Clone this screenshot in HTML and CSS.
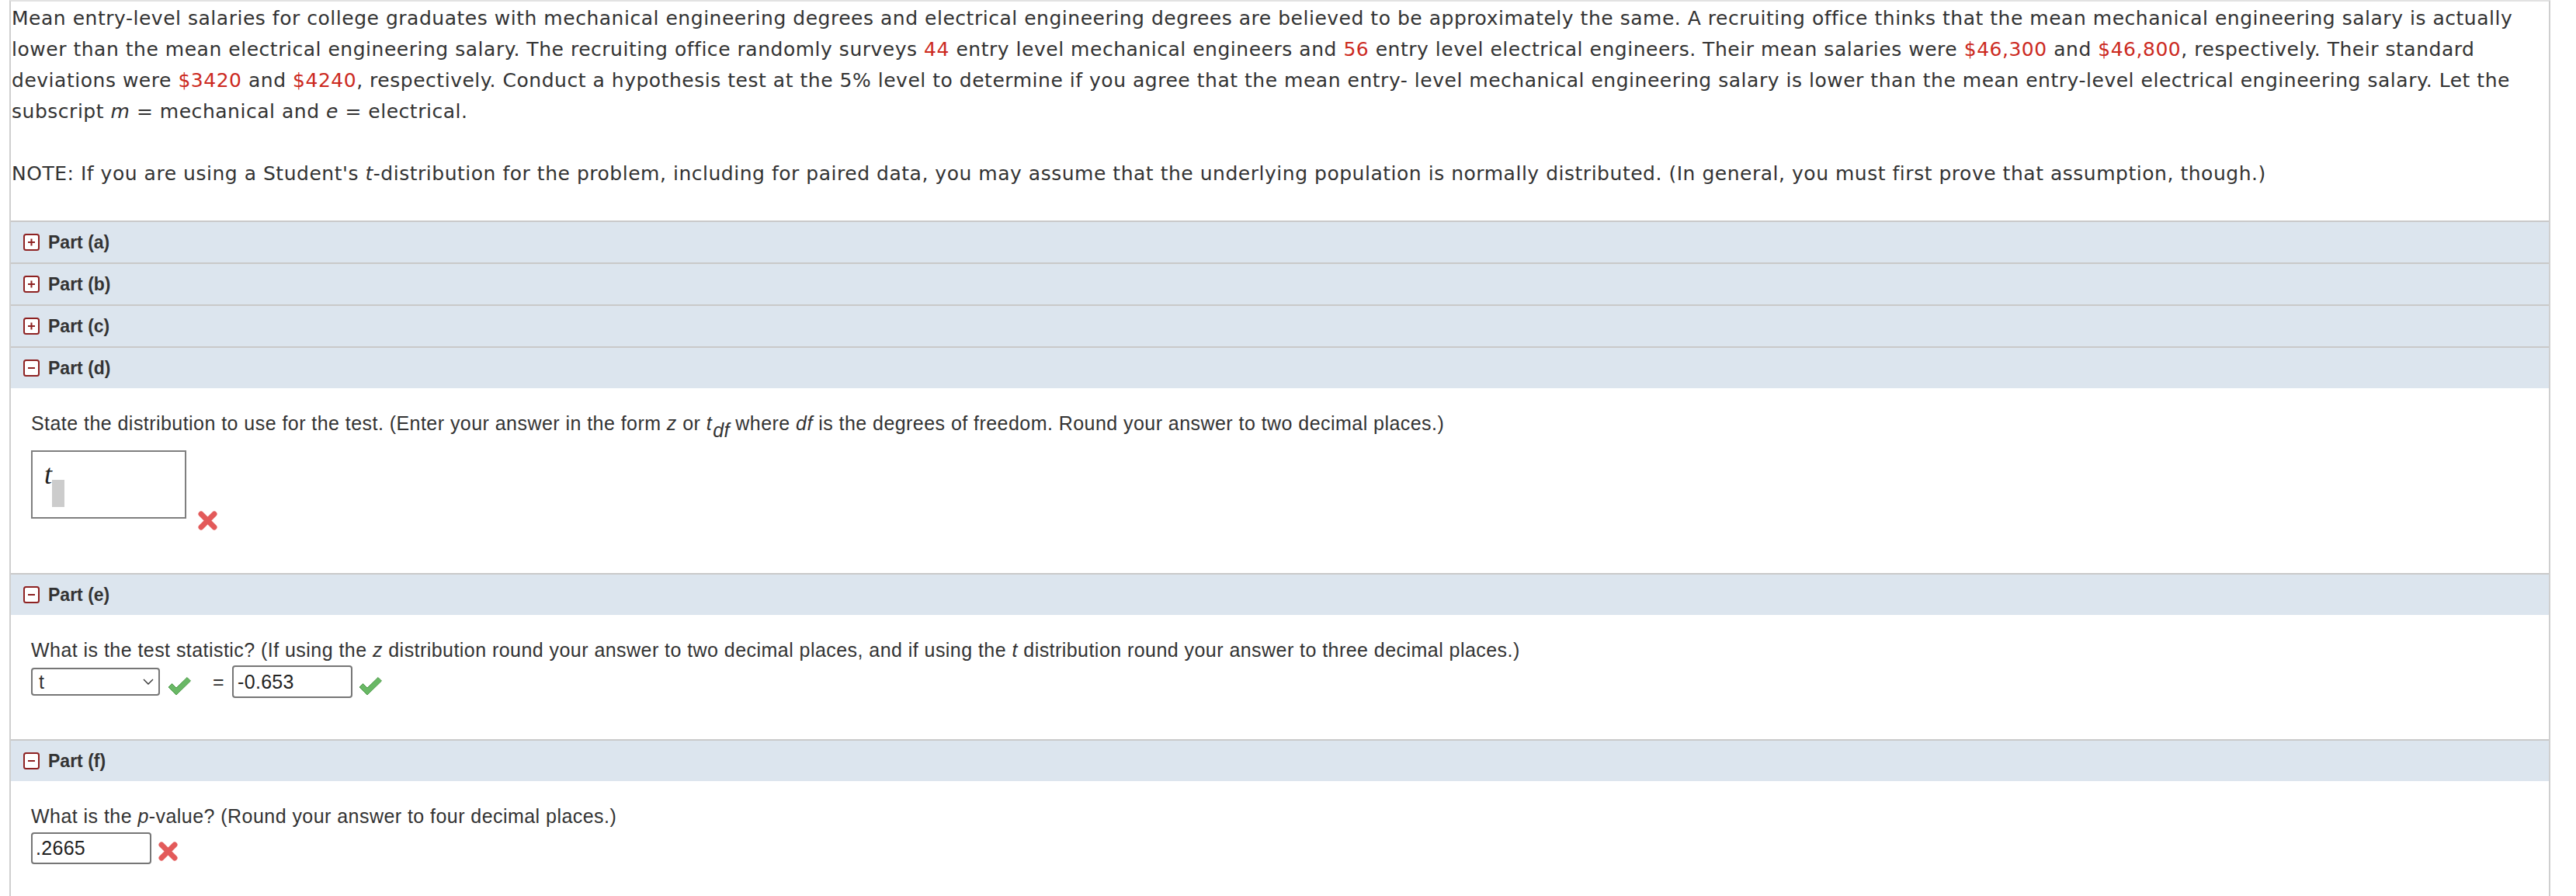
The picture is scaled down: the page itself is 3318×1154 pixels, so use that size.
FILE: index.html
```html
<!DOCTYPE html>
<html lang="en">
<head>
  <meta charset="UTF-8" />
  <title>Hypothesis Test - Salaries</title>
  <link rel="stylesheet" href="styles.css">
</head>
<body>
  <div class="question">
    <!-- problem statement -->
    <div class="intro">
      <span class="line">Mean entry-level salaries for college graduates with mechanical engineering degrees and electrical engineering degrees are believed to be approximately the same. A recruiting office thinks that the mean mechanical engineering salary is actually</span>
      <span class="line">lower than the mean electrical engineering salary. The recruiting office randomly surveys <span class="num">44</span> entry level mechanical engineers and <span class="num">56</span> entry level electrical engineers. Their mean salaries were <span class="num">$46,300</span> and <span class="num">$46,800</span>, respectively. Their standard</span>
      <span class="line">deviations were <span class="num">$3420</span> and <span class="num">$4240</span>, respectively. Conduct a hypothesis test at the 5% level to determine if you agree that the mean entry- level mechanical engineering salary is lower than the mean entry-level electrical engineering salary. Let the</span>
      <span class="line">subscript <i>m</i> = mechanical and <i>e</i> = electrical.</span>
      <span class="line">&nbsp;</span>
      <span class="line">NOTE: If you are using a Student's <i>t</i>-distribution for the problem, including for paired data, you may assume that the underlying population is normally distributed. (In general, you must first prove that assumption, though.)</span>
    </div>

    <!-- collapsed parts -->
    <div class="part-head">
      <svg class="toggle" viewBox="0 0 21 22"><rect x="1" y="1" width="19" height="20" rx="2.5" fill="#fff" stroke="#8e2222" stroke-width="2"/><path d="M6 11h9M10.5 6.5v9" stroke="#8e2222" stroke-width="2"/></svg>
      <span>Part (a)</span>
    </div>
    <div class="part-head">
      <svg class="toggle" viewBox="0 0 21 22"><rect x="1" y="1" width="19" height="20" rx="2.5" fill="#fff" stroke="#8e2222" stroke-width="2"/><path d="M6 11h9M10.5 6.5v9" stroke="#8e2222" stroke-width="2"/></svg>
      <span>Part (b)</span>
    </div>
    <div class="part-head">
      <svg class="toggle" viewBox="0 0 21 22"><rect x="1" y="1" width="19" height="20" rx="2.5" fill="#fff" stroke="#8e2222" stroke-width="2"/><path d="M6 11h9M10.5 6.5v9" stroke="#8e2222" stroke-width="2"/></svg>
      <span>Part (c)</span>
    </div>

    <!-- part d -->
    <div class="part-head">
      <svg class="toggle" viewBox="0 0 21 22"><rect x="1" y="1" width="19" height="20" rx="2.5" fill="#fff" stroke="#8e2222" stroke-width="2"/><path d="M6 11h9" stroke="#8e2222" stroke-width="2"/></svg>
      <span>Part (d)</span>
    </div>
    <div class="part-body part-d">
      <p>State the distribution to use for the test. (Enter your answer in the form <i>z</i> or <i>t</i><i class="sub">df</i> where <i>df</i> is the degrees of freedom. Round your answer to two decimal places.)</p>
      <div class="answer answer-d">
        <div class="math-box">
          <span class="math-t">t</span><span class="math-slot"></span>
        </div>
        <svg class="mark-x drop" viewBox="0 0 27 27"><path d="M5 5L22 22M22 5L5 22" stroke="#e35a5a" stroke-width="7" stroke-linecap="round"/></svg>
      </div>
    </div>

    <!-- part e -->
    <div class="part-head">
      <svg class="toggle" viewBox="0 0 21 22"><rect x="1" y="1" width="19" height="20" rx="2.5" fill="#fff" stroke="#8e2222" stroke-width="2"/><path d="M6 11h9" stroke="#8e2222" stroke-width="2"/></svg>
      <span>Part (e)</span>
    </div>
    <div class="part-body part-e">
      <p>What is the test statistic? (If using the <i>z</i> distribution round your answer to two decimal places, and if using the <i>t</i> distribution round your answer to three decimal places.)</p>
      <div class="answer">
        <div class="fake-select">
          <span>t</span>
          <svg class="chev" viewBox="0 0 14 8"><path d="M1 1l6 6 6-6" fill="none" stroke="#333" stroke-width="1.4"/></svg>
        </div>
        <svg class="mark-check" viewBox="0 0 30 24"><path d="M1 13L5.5 8.5L11 14L25 0.5L29.5 5L11 23Z" fill="#69b865" stroke="#4f9a4b" stroke-width="1"/></svg>
        <span class="eq">=</span>
        <input class="box stat" type="text" value="-0.653">
        <svg class="mark-check" viewBox="0 0 30 24"><path d="M1 13L5.5 8.5L11 14L25 0.5L29.5 5L11 23Z" fill="#69b865" stroke="#4f9a4b" stroke-width="1"/></svg>
      </div>
    </div>

    <!-- part f -->
    <div class="part-head">
      <svg class="toggle" viewBox="0 0 21 22"><rect x="1" y="1" width="19" height="20" rx="2.5" fill="#fff" stroke="#8e2222" stroke-width="2"/><path d="M6 11h9" stroke="#8e2222" stroke-width="2"/></svg>
      <span>Part (f)</span>
    </div>
    <div class="part-body part-f">
      <p>What is the <i>p</i>-value? (Round your answer to four decimal places.)</p>
      <div class="answer">
        <input class="box pval" type="text" value=".2665">
        <svg class="mark-x" viewBox="0 0 27 27"><path d="M5 5L22 22M22 5L5 22" stroke="#e35a5a" stroke-width="7" stroke-linecap="round"/></svg>
      </div>
    </div>
  </div>
</body>
</html>
```

FILE: styles.css
```css
body {
  margin: 0;
  background: #fff;
  color: #333;
  font-family: 'Liberation Sans', Arial, sans-serif;
}

.question {
  width: 3273px;
  margin-left: 12px;
  box-sizing: border-box;
  border-top: 2px solid #e2e2e2;
  border-left: 2px solid #cfcfcf;
  border-right: 2px solid #cfcfcf;
  min-height: 1154px;
}

/* problem statement */
.intro {
  font-family: Verdana, 'DejaVu Sans', sans-serif;
  font-size: 25px;
  letter-spacing: 0.52px;
  line-height: 40px;
  padding: 2px 0 40px 1px;
}
.intro .line { display: block; white-space: nowrap; }
.intro .num { color: #cc2a1f; }

/* part headers */
.part-head {
  display: flex;
  align-items: center;
  height: 52px;
  border-top: 2px solid #c9c9c9;
  background: #dce5ee;
  padding-left: 16px;
  font-size: 23px;
  font-weight: bold;
  color: #333;
}
.toggle { width: 21px; height: 22px; margin-right: 11px; }

/* part bodies */
.part-body {
  padding: 31px 26px 0;
  font-size: 25px;
  letter-spacing: 0.45px;
}
.part-body p { margin: 0; line-height: 28px; }
.sub { position: relative; top: 9px; margin-left: 1px; }

.answer { display: flex; align-items: center; }

.part-d { padding-bottom: 70px; }
.answer-d { margin-top: 21px; align-items: flex-end; }
.math-box {
  width: 200px;
  height: 88px;
  box-sizing: border-box;
  border: 2px solid #7f7f7f;
  display: flex;
  align-items: flex-start;
  padding-left: 15px;
}
.math-t {
  font-family: 'Liberation Serif', 'Times New Roman', serif;
  font-style: italic;
  font-size: 36px;
  line-height: 30px;
  margin-top: 14px;
  letter-spacing: 0;
  color: #222;
}
.math-slot {
  width: 16px;
  height: 35px;
  background: #ccc;
  margin-top: 36px;
}
.mark-x { width: 27px; height: 27px; margin-left: 14px; }
.mark-x.drop { margin-bottom: -16px; }

.part-e { padding-bottom: 53px; }
.part-e .answer { margin-top: 6px; }
.fake-select {
  width: 166px;
  height: 36px;
  box-sizing: border-box;
  border: 2px solid #767676;
  border-radius: 4px;
  display: flex;
  align-items: center;
  justify-content: space-between;
  padding: 0 6px 0 8px;
}
.chev { width: 14px; height: 8px; }
.mark-check { width: 30px; height: 24px; margin-left: 10px; margin-top: 11px; }
.eq { margin: 0 10px 0 28px; }

.box {
  box-sizing: border-box;
  height: 42px;
  border: 2px solid #767676;
  border-radius: 4px;
  padding: 0 5px;
  font-family: 'Liberation Sans', Arial, sans-serif;
  font-size: 25px;
  letter-spacing: 0.3px;
  color: #222;
}
.stat { width: 155px; }
.part-e .stat + .mark-check { margin-left: 8px; }

.part-f .answer { margin-top: 7px; }
.pval { width: 155px; height: 41px; padding-left: 4px; }
.part-f .mark-x { margin-left: 8px; margin-top: 8px; }
```
